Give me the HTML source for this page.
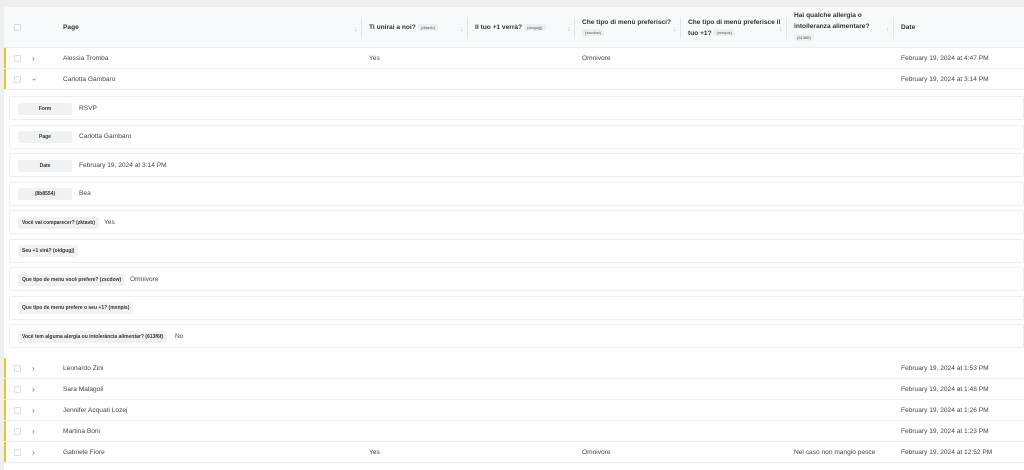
<!DOCTYPE html>
<html><head><meta charset="utf-8"><style>
*{box-sizing:border-box;margin:0;padding:0}
body{width:1024px;height:470px;overflow:hidden;background:#efefef;font-family:"Liberation Sans",sans-serif;font-size:6.6px;color:#444;position:relative}
.main{position:absolute;left:4px;top:7px;right:0;bottom:0;background:#fff}
.hdr{position:absolute;left:4px;top:7px;right:0;height:41px;background:#f8f9fa;border-bottom:1px solid #eceef0}
.h{position:absolute;top:0;height:41px;display:flex;align-items:center;font-weight:bold;color:#333;font-size:6.6px;line-height:11px}
.div{position:absolute;top:10px;height:22px;width:1px;background:#e3e5e8}
.arr{position:absolute;top:19px;color:#bbb;font-size:7px}
.tag{display:inline-block;background:#eceef0;border-radius:2px;font-size:4px;font-weight:normal;padding:1px 3px;line-height:5px;color:#555;vertical-align:middle}
.row{position:absolute;left:4px;right:0;height:21px;border-bottom:1px solid #eceef0;background:#fff}
.row .bar{position:absolute;left:0;top:0;bottom:0;width:1.5px;background:#e8c330}
.cb{position:absolute;left:10px;top:7px;width:7px;height:7px;border:1px solid #ddd;border-radius:1px}
.chev{position:absolute;left:28px;top:0;line-height:21px;color:#666;font-size:8px}
.t{position:absolute;top:0;line-height:21px;white-space:nowrap}
.card{position:absolute;left:9px;right:0;height:24px;border:1px solid #eceef0;border-radius:2px;background:#fff}
.pill{position:absolute;left:8px;top:5.5px;height:12px;background:#f0f1f3;border-radius:2px;font-weight:bold;font-size:5px;color:#333;line-height:12px;padding:0 4px;text-align:center;white-space:nowrap}
.pill.w{width:54px}
.val{position:absolute;top:5.5px;line-height:12px;white-space:nowrap;font-size:6.6px}
</style></head><body>
<div class="main"></div>
<div class="hdr">
 <div class="cb" style="top:17px"></div>
 <div class="h" style="left:59px">Page</div>
 <div class="arr" style="left:350px">↓</div><div class="div" style="left:357px"></div>
 <div class="h" style="left:365px">Ti unirai a noi?&nbsp;<span class="tag">(zktavb)</span></div>
 <div class="arr" style="left:456px">↓</div><div class="div" style="left:463px"></div>
 <div class="h" style="left:471px">Il tuo +1 verrà?&nbsp;<span class="tag">(oidgugj)</span></div>
 <div class="arr" style="left:563px">↓</div><div class="div" style="left:570px"></div>
 <div class="h" style="left:578px"><div>Che tipo di menù preferisci?<br><span class="tag">(zscdow)</span></div></div>
 <div class="arr" style="left:669px">↓</div><div class="div" style="left:676px"></div>
 <div class="h" style="left:684px"><div>Che tipo di menù preferisce il<br>tuo +1? <span class="tag">(mxnpis)</span></div></div>
 <div class="arr" style="left:775px">↓</div><div class="div" style="left:782px"></div>
 <div class="h" style="left:790px;top:-1px"><div>Hai qualche allergia o<br>intolleranza alimentare?<br><span class="tag">(613f6f)</span></div></div>
 <div class="arr" style="left:882px">↓</div><div class="div" style="left:889px"></div>
 <div class="h" style="left:897px">Date</div>
</div>

<div class="row" style="top:48px"><div class="bar"></div><div class="cb"></div><div class="chev">›</div><div class="t" style="left:59px">Alessia Tromba</div><div class="t" style="left:365px">Yes</div><div class="t" style="left:578px">Omnivore</div><div class="t" style="left:897px">February 19, 2024 at 4:47 PM</div></div>
<div class="row" style="top:69px"><div class="bar"></div><div class="cb"></div><div class="chev" style="transform:rotate(90deg);left:29px">›</div><div class="t" style="left:59px">Carlotta Gambaro</div><div class="t" style="left:897px">February 19, 2024 at 3:14 PM</div></div>

<div class="card" style="top:96px"><div class="pill w">Form</div><div class="val" style="left:69px">RSVP</div></div>
<div class="card" style="top:124.5px"><div class="pill w">Page</div><div class="val" style="left:69px">Carlotta Gambaro</div></div>
<div class="card" style="top:153px"><div class="pill w">Date</div><div class="val" style="left:69px">February 19, 2024 at 3:14 PM</div></div>
<div class="card" style="top:181.5px"><div class="pill w">(8b8554)</div><div class="val" style="left:69px">Bea</div></div>
<div class="card" style="top:210px"><div class="pill">Você vai comparecer? (zktavb)</div><div class="val" style="left:94px">Yes</div></div>
<div class="card" style="top:238.5px"><div class="pill">Seu +1 virá? (oidgugj)</div></div>
<div class="card" style="top:267px"><div class="pill">Que tipo de menu você prefere? (zscdow)</div><div class="val" style="left:120px">Omnivore</div></div>
<div class="card" style="top:295.5px"><div class="pill">Que tipo de menu prefere o seu +1? (mxnpis)</div></div>
<div class="card" style="top:324px"><div class="pill">Você tem alguma alergia ou intolerância alimentar? (613f6f)</div><div class="val" style="left:165px">No</div></div>

<div class="row" style="top:358px"><div class="bar"></div><div class="cb"></div><div class="chev">›</div><div class="t" style="left:59px">Leonardo Zini</div><div class="t" style="left:897px">February 19, 2024 at 1:53 PM</div></div>
<div class="row" style="top:379px"><div class="bar"></div><div class="cb"></div><div class="chev">›</div><div class="t" style="left:59px">Sara Malagoli</div><div class="t" style="left:897px">February 19, 2024 at 1:48 PM</div></div>
<div class="row" style="top:400px"><div class="bar"></div><div class="cb"></div><div class="chev">›</div><div class="t" style="left:59px">Jennifer Acquati Lozej</div><div class="t" style="left:897px">February 19, 2024 at 1:26 PM</div></div>
<div class="row" style="top:421px"><div class="bar"></div><div class="cb"></div><div class="chev">›</div><div class="t" style="left:59px">Martina Boni</div><div class="t" style="left:897px">February 19, 2024 at 1:23 PM</div></div>
<div class="row" style="top:442px"><div class="bar"></div><div class="cb"></div><div class="chev">›</div><div class="t" style="left:59px">Gabriele Fiore</div><div class="t" style="left:365px">Yes</div><div class="t" style="left:578px">Omnivore</div><div class="t" style="left:790px">Nel caso non mangio pesce</div><div class="t" style="left:897px">February 19, 2024 at 12:52 PM</div></div>
</body></html>
